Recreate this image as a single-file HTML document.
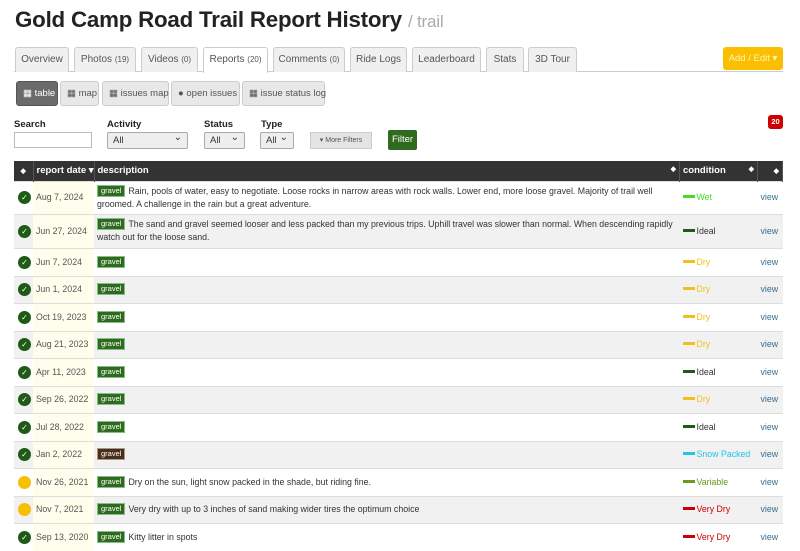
<!DOCTYPE html>
<html><head><style>
*{box-sizing:border-box}
body{margin:0;width:800px;height:544px;overflow:hidden;background:#fff;font-family:"Liberation Sans",Arial,sans-serif;color:#333;position:relative}
.a{position:absolute}
h1{position:absolute;left:15px;top:7px;margin:0;font-size:22.3px;font-weight:bold;color:#222;letter-spacing:-0.2px;white-space:nowrap}
h1 span{font-weight:normal;color:#aaa;font-size:17px}
.tab{position:absolute;top:47px;height:25px;border:1px solid #ccc;border-bottom:none;background:#f0f0f0;border-radius:3px 3px 0 0;font-size:10px;color:#555;text-align:center;line-height:24px;white-space:nowrap}
.tab small{font-size:8px}
.tab.act{background:#fff;height:26px}
.sb{position:absolute;top:81px;height:25px;border:1px solid #ccc;background:#e8e8e8;border-radius:3px;font-size:9.5px;color:#555;line-height:23px;padding-left:6px;white-space:nowrap}
.lbl{position:absolute;top:119px;font-size:9.5px;font-weight:bold;color:#222}
.sel{position:absolute;top:132px;height:17px;border:1px solid #aaa;background:#eee;font-size:9.5px;line-height:15px;padding-left:5px;border-radius:2px}
.sel:after{content:"⌄";position:absolute;right:5px;top:-3px;font-size:10px}
table{position:absolute;left:14px;top:161px;width:769px;border-collapse:collapse;font-size:8.8px;color:#333;table-layout:fixed}
th{background:#333;color:#fff;height:20px;text-align:left;font-size:9.5px;padding:0 3px;border-right:1px solid #555;white-space:nowrap}
td{border-top:1px solid #ddd;padding:0 3px;vertical-align:middle;line-height:13px}
tr.g td{background:#f1f1f1}
td.d{background:#fffdeb!important;color:#555;white-space:nowrap}
.gv{display:inline-block;background:#2f6b1f;color:#fff;font-size:7.5px;line-height:10px;padding:0 3px;border:1px solid #8b8;margin-right:3px;vertical-align:1px}
.ck{display:inline-block;width:13px;height:13px;border-radius:50%;background:#1f5a17;color:#fff;font-size:8px;line-height:13px;text-align:center;margin-left:1px;vertical-align:middle}
.yl{display:inline-block;width:13px;height:13px;border-radius:50%;background:#f5c000;margin-left:1px;vertical-align:middle}
.bar{display:inline-block;width:12px;height:3px;vertical-align:2px;margin-right:2px}
.v{color:#3a6d8c}
td:nth-child(4){white-space:nowrap}
</style></head><body>
<h1>Gold Camp Road Trail Report History <span>/ trail</span></h1>
<div class="a" style="left:14px;top:71px;width:769px;height:1px;background:#ccc"></div>
<div class="tab" style="left:15px;width:54px">Overview</div>
<div class="tab" style="left:74px;width:62px">Photos <small>(19)</small></div>
<div class="tab" style="left:141px;width:57px">Videos <small>(0)</small></div>
<div class="tab act" style="left:203px;width:65px">Reports <small>(20)</small></div>
<div class="tab" style="left:273px;width:72px">Comments <small>(0)</small></div>
<div class="tab" style="left:350px;width:57px">Ride Logs</div>
<div class="tab" style="left:412px;width:69px">Leaderboard</div>
<div class="tab" style="left:486px;width:38px">Stats</div>
<div class="tab" style="left:528px;width:49px">3D Tour</div>
<div class="a" style="left:723px;top:47px;width:60px;height:23px;background:#fbbf00;border-radius:3px;color:#fff3c0;font-size:9.5px;line-height:23px;text-align:center">Add / Edit ▾</div>
<div class="sb" style="left:16px;width:42px;background:#6b6b6b;color:#fff;border-color:#555">▦ table</div>
<div class="sb" style="left:60px;width:39px">▦ map</div>
<div class="sb" style="left:102px;width:67px">▦ issues map</div>
<div class="sb" style="left:171px;width:69px">● open issues</div>
<div class="sb" style="left:242px;width:83px">▦ issue status log</div>
<div class="lbl" style="left:14px">Search</div>
<div class="lbl" style="left:107px">Activity</div>
<div class="lbl" style="left:204px">Status</div>
<div class="lbl" style="left:261px">Type</div>
<div class="a" style="left:14px;top:132px;width:78px;height:16px;border:1px solid #bbb"></div>
<div class="sel" style="left:107px;width:81px">All</div>
<div class="sel" style="left:204px;width:41px">All</div>
<div class="sel" style="left:260px;width:34px">All</div>
<div class="a" style="left:310px;top:132px;width:62px;height:17px;background:#e4e4e4;border:1px solid #ccc;font-size:7px;color:#555;text-align:center;line-height:15px">▾ More Filters</div>
<div class="a" style="left:388px;top:130px;width:29px;height:20px;background:#2f6b1f;border-radius:2px;color:#fff;font-size:9.5px;text-align:center;line-height:20px">Filter</div>
<div class="a" style="left:768px;top:115px;width:15px;height:14px;background:#c00;border-radius:3px;color:#fff;font-size:7.5px;text-align:center;line-height:14px;font-weight:bold">20</div>
<table>
<colgroup><col style="width:19px"><col style="width:61px"><col><col style="width:78px"><col style="width:25px"></colgroup>
<tr><th style="text-align:center;font-size:7px">◆</th><th>report date ▾</th><th>description <span style="float:right;font-size:7px">◆</span></th><th>condition <span style="float:right;font-size:7px">◆</span></th><th style="text-align:right;font-size:7px">◆</th></tr>
<tr style="height:33px"><td><span class="ck">✓</span></td><td class="d">Aug 7, 2024</td><td><span class="gv">gravel</span>Rain, pools of water, easy to negotiate. Loose rocks in narrow areas with rock walls. Lower end, more loose gravel. Majority of trail well groomed. A challenge in the rain but a great adventure.</td><td style="color:#44dd22"><span class="bar" style="background:#44dd22"></span>Wet</td><td class="v">view</td></tr>
<tr class="g" style="height:34px"><td><span class="ck">✓</span></td><td class="d">Jun 27, 2024</td><td><span class="gv">gravel</span>The sand and gravel seemed looser and less packed than my previous trips. Uphill travel was slower than normal. When descending rapidly watch out for the loose sand.</td><td><span class="bar" style="background:#1f5a17"></span>Ideal</td><td class="v">view</td></tr>
<tr style="height:28px"><td><span class="ck">✓</span></td><td class="d">Jun 7, 2024</td><td><span class="gv">gravel</span></td><td style="color:#f0c020"><span class="bar" style="background:#f0c020"></span>Dry</td><td class="v">view</td></tr>
<tr class="g" style="height:27.5px"><td><span class="ck">✓</span></td><td class="d">Jun 1, 2024</td><td><span class="gv">gravel</span></td><td style="color:#f0c020"><span class="bar" style="background:#f0c020"></span>Dry</td><td class="v">view</td></tr>
<tr style="height:27.5px"><td><span class="ck">✓</span></td><td class="d">Oct 19, 2023</td><td><span class="gv">gravel</span></td><td style="color:#f0c020"><span class="bar" style="background:#f0c020"></span>Dry</td><td class="v">view</td></tr>
<tr class="g" style="height:27.5px"><td><span class="ck">✓</span></td><td class="d">Aug 21, 2023</td><td><span class="gv">gravel</span></td><td style="color:#f0c020"><span class="bar" style="background:#f0c020"></span>Dry</td><td class="v">view</td></tr>
<tr style="height:27.5px"><td><span class="ck">✓</span></td><td class="d">Apr 11, 2023</td><td><span class="gv">gravel</span></td><td><span class="bar" style="background:#1f5a17"></span>Ideal</td><td class="v">view</td></tr>
<tr class="g" style="height:27.5px"><td><span class="ck">✓</span></td><td class="d">Sep 26, 2022</td><td><span class="gv">gravel</span></td><td style="color:#f0c020"><span class="bar" style="background:#f0c020"></span>Dry</td><td class="v">view</td></tr>
<tr style="height:27.5px"><td><span class="ck">✓</span></td><td class="d">Jul 28, 2022</td><td><span class="gv">gravel</span></td><td><span class="bar" style="background:#1f5a17"></span>Ideal</td><td class="v">view</td></tr>
<tr class="g" style="height:27.5px"><td><span class="ck">✓</span></td><td class="d">Jan 2, 2022</td><td><span class="gv" style="background:#4a2e1c;border-color:#a98">gravel</span></td><td style="color:#22c4e8"><span class="bar" style="background:#22c4e8"></span>Snow Packed</td><td class="v">view</td></tr>
<tr style="height:27.5px"><td><span class="yl"></span></td><td class="d">Nov 26, 2021</td><td><span class="gv">gravel</span>Dry on the sun, light snow packed in the shade, but riding fine.</td><td style="color:#6a9a20"><span class="bar" style="background:#6a9a20"></span>Variable</td><td class="v">view</td></tr>
<tr class="g" style="height:27.5px"><td><span class="yl"></span></td><td class="d">Nov 7, 2021</td><td><span class="gv">gravel</span>Very dry with up to 3 inches of sand making wider tires the optimum choice</td><td style="color:#c00"><span class="bar" style="background:#c00"></span>Very Dry</td><td class="v">view</td></tr>
<tr style="height:27.5px"><td><span class="ck">✓</span></td><td class="d">Sep 13, 2020</td><td><span class="gv">gravel</span>Kitty litter in spots</td><td style="color:#c00"><span class="bar" style="background:#c00"></span>Very Dry</td><td class="v">view</td></tr>
</table>
</body></html>
